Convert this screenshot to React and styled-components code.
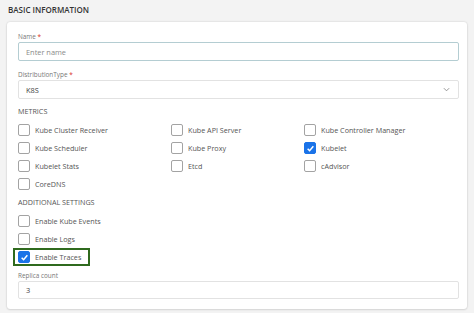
import React from 'react';
import styled, { createGlobalStyle, css } from 'styled-components';

const GlobalStyle = createGlobalStyle`
  html, body {
    margin: 0;
    padding: 0;
    background: #f3f3f3;
    font-family: 'Open Sans', 'Liberation Sans', sans-serif;
  }
  * { box-sizing: border-box; }
`;

const Page = styled.div`
  width: 474px;
  height: 313px;
  padding: 2px 7px 0 7px;
  overflow: hidden;
`;

const Title = styled.h2`
  margin: 0 0 5px 1px;
  font-size: 8px;
  line-height: 15px;
  font-weight: 600;
  color: #333;
`;

const Card = styled.div`
  background: #fff;
  border-radius: 3px;
  box-shadow: 0 0 2px rgba(0, 0, 0, 0.18), 0 1px 2px rgba(0, 0, 0, 0.08);
  padding: 10px 8px 10px 11px;
`;

const Field = styled.div`
  display: flex;
  flex-direction: column;
  margin-bottom: ${({ $last }) => ($last ? '0' : '9px')};
`;

const Label = styled.label`
  font-size: 6.4px;
  line-height: 9px;
  color: #777;
  margin-bottom: 1px;
`;

const Required = styled.span`
  color: #d93025;
`;

const Input = styled.div`
  height: ${({ $short }) => ($short ? '18px' : '19px')};
  border: 1px solid ${({ $focused }) => ($focused ? '#b4cdd2' : '#e2e2e2')};
  border-radius: 2px;
  display: flex;
  align-items: center;
  justify-content: space-between;
  padding: 0 8px 0 7px;
  font-size: 7.4px;
  color: ${({ $placeholder }) => ($placeholder ? '#8a8a8a' : '#444')};
`;

const Section = styled.div`
  font-size: 7.2px;
  line-height: 10px;
  color: #555;
  margin: ${({ $tight }) => ($tight ? '4px' : '7px')} 0 5px;
`;

const OptionGrid = styled.div`
  display: grid;
  grid-template-columns: ${({ $cols }) => $cols};
`;

const Option = styled.label`
  display: inline-flex;
  align-items: center;
  gap: 5px;
  height: 18px;
  margin-left: -5px;
  padding: 0 7px 0 3px;
  border: 2px solid transparent;
  font-size: 7.2px;
  color: #555;
  justify-self: start;
  ${({ $focused }) =>
    $focused &&
    css`
      border-color: #2f6a1e;
    `}
`;

const Box = styled.span`
  width: 12px;
  height: 12px;
  border-radius: 2px;
  border: 1px solid #a3a3a3;
  display: flex;
  align-items: center;
  justify-content: center;
  flex-shrink: 0;
  ${({ $checked }) =>
    $checked &&
    css`
      background: #1a73e8;
      border-color: #1a73e8;
    `}
`;

const Spacer = styled.div`
  height: 5px;
`;

const Check = () => (
  <svg width="9" height="9" viewBox="0 0 12 12">
    <path d="M2.2 6.4 L4.8 9 L9.8 3" fill="none" stroke="#fff" strokeWidth="2" />
  </svg>
);

const Chevron = () => (
  <svg width="7" height="5" viewBox="0 0 8 5">
    <path d="M1 1 L4 4 L7 1" fill="none" stroke="#888" strokeWidth="1" />
  </svg>
);

const Checkbox = ({ label, checked, focused }) => (
  <Option $focused={focused}>
    <Box $checked={checked}>{checked && <Check />}</Box>
    {label}
  </Option>
);

const metrics = [
  ['Kube Cluster Receiver', false],
  ['Kube API Server', false],
  ['Kube Controller Manager', false],
  ['Kube Scheduler', false],
  ['Kube Proxy', false],
  ['Kubelet', true],
  ['Kubelet Stats', false],
  ['Etcd', false],
  ['cAdvisor', false],
  ['CoreDNS', false],
];

const settings = [
  ['Enable Kube Events', false, false],
  ['Enable Logs', false, false],
  ['Enable Traces', true, true],
];

export default function App() {
  return (
    <>
      <GlobalStyle />
      <Page>
        <Title>BASIC INFORMATION</Title>
        <Card>
          <Field>
            <Label>
              Name <Required>*</Required>
            </Label>
            <Input $focused $placeholder>Enter name</Input>
          </Field>
          <Field $last>
            <Label>
              DistributionType <Required>*</Required>
            </Label>
            <Input>
              K8S
              <Chevron />
            </Input>
          </Field>

          <Section>METRICS</Section>
          <OptionGrid $cols="153px 133px 1fr">
            {metrics.map(([name, checked]) => (
              <Checkbox key={name} label={name} checked={checked} />
            ))}
          </OptionGrid>

          <Section $tight>ADDITIONAL SETTINGS</Section>
          <OptionGrid $cols="1fr">
            {settings.map(([name, checked, focused]) => (
              <Checkbox key={name} label={name} checked={checked} focused={focused} />
            ))}
          </OptionGrid>

          <Spacer />
          <Field $last>
            <Label>Replica count</Label>
            <Input $short>3</Input>
          </Field>
        </Card>
      </Page>
    </>
  );
}
